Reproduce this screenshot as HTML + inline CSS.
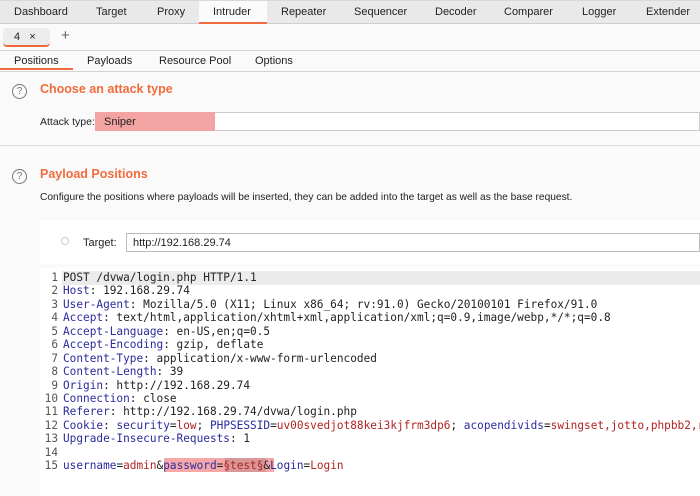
<!DOCTYPE html><html><head><style>
*{margin:0;padding:0;box-sizing:border-box}
body{width:700px;height:496px;overflow:hidden;background:#fafafa;font-family:"Liberation Sans",sans-serif;font-size:11px;color:#222;position:relative}
.a{position:absolute}
.bar1{left:0;top:0;width:700px;height:24px;background:#e9e9e9;border-bottom:1px solid #cfcfcf;border-top:1px solid #d8d8d8}
.bar1 span{position:absolute;top:5px}
.code{font-family:"DejaVu Sans Mono","Liberation Mono",monospace;font-size:11.1px;line-height:13.43px;white-space:pre;overflow:hidden}
.k{color:#2b2b9e}.v{color:#b22222}
</style></head><body>
<div class="a bar1">
<span style="left:14px">Dashboard</span><span style="left:96px">Target</span><span style="left:157px">Proxy</span>
<div class="a" style="left:199px;top:0;width:68px;height:23px;background:#fbfbfb;border-bottom:2px solid #f06a3c"></div>
<span style="left:213px">Intruder</span><span style="left:281px">Repeater</span><span style="left:354px">Sequencer</span><span style="left:435px">Decoder</span><span style="left:504px">Comparer</span><span style="left:582px">Logger</span><span style="left:646px">Extender</span>
</div>
<div class="a" style="left:0;top:50px;width:700px;height:1px;background:#d4d4d4"></div>
<div class="a" style="left:3px;top:28px;width:47px;height:19px;background:#ececec;border-radius:4px;border-bottom:2px solid #f06a3c"></div>
<div class="a" style="left:14px;top:31px">4&nbsp;&nbsp;&nbsp;×</div>
<div class="a" style="left:61px;top:27px;font-size:15px;color:#666">+</div>
<div class="a" style="left:0;top:71px;width:700px;height:1px;background:#d4d4d4"></div>
<div class="a" style="left:0;top:68px;width:73px;height:2px;background:#f06a3c"></div>
<div class="a" style="left:14px;top:55px">Positions</div><div class="a" style="left:87px;top:55px">Payloads</div><div class="a" style="left:159px;top:55px">Resource Pool</div><div class="a" style="left:255px;top:55px">Options</div>
<div class="a" style="left:12px;top:84px;width:15px;height:15px;border:1.3px solid #777;border-radius:50%;font-size:10px;text-align:center;line-height:13px;color:#777">?</div>
<div class="a" style="left:40px;top:82px;color:#f26b3a;font-weight:bold;font-size:12.5px">Choose an attack type</div>
<div class="a" style="left:40px;top:116px;font-size:10.5px">Attack type:</div>
<div class="a" style="left:97px;top:112px;width:603px;height:19px;background:#fff;border:1px solid #ccc"></div>
<div class="a" style="left:95px;top:112px;width:120px;height:19px;background:#f4a3a3"></div>
<div class="a" style="left:104px;top:116px">Sniper</div>
<div class="a" style="left:0;top:145px;width:700px;height:1px;background:#dcdcdc"></div>
<div class="a" style="left:12px;top:169px;width:15px;height:15px;border:1.3px solid #777;border-radius:50%;font-size:10px;text-align:center;line-height:13px;color:#777">?</div>
<div class="a" style="left:40px;top:167px;color:#f26b3a;font-weight:bold;font-size:12.5px">Payload Positions</div>
<div class="a" style="left:40px;top:192px;font-size:10.2px">Configure the positions where payloads will be inserted, they can be added into the target as well as the base request.</div>
<div class="a" style="left:40px;top:220px;width:660px;height:44px;background:#fff"></div>
<div class="a" style="left:61px;top:237px;width:8px;height:8px;border:1px solid #ccc;border-radius:50%"></div>
<div class="a" style="left:83px;top:237px">Target:</div>
<div class="a" style="left:126px;top:233px;width:574px;height:19px;background:#fff;border:1px solid #bbb"></div>
<div class="a" style="left:133px;top:237px">http://192.168.29.74</div>
<div class="a" style="left:40px;top:268px;width:660px;height:228px;background:#fff"></div>
<div class="a" style="left:62px;top:271px;width:638px;height:14px;background:#ebebeb"></div>
<div class="a" style="left:164px;top:458px;width:110px;height:14px;background:#f6a8a8"></div>
<div class="a" style="left:225px;top:458px;width:41px;height:14px;background:#d89898"></div>
<div class="a code" style="left:40px;top:271px;width:18px;text-align:right;color:#555">1
2
3
4
5
6
7
8
9
10
11
12
13
14
15</div>
<div class="a code" style="left:63px;top:271px;width:637px">POST /dvwa/login.php HTTP/1.1
<span class="k">Host</span>: 192.168.29.74
<span class="k">User-Agent</span>: Mozilla/5.0 (X11; Linux x86_64; rv:91.0) Gecko/20100101 Firefox/91.0
<span class="k">Accept</span>: text/html,application/xhtml+xml,application/xml;q=0.9,image/webp,*/*;q=0.8
<span class="k">Accept-Language</span>: en-US,en;q=0.5
<span class="k">Accept-Encoding</span>: gzip, deflate
<span class="k">Content-Type</span>: application/x-www-form-urlencoded
<span class="k">Content-Length</span>: 39
<span class="k">Origin</span>: http://192.168.29.74
<span class="k">Connection</span>: close
<span class="k">Referer</span>: http://192.168.29.74/dvwa/login.php
<span class="k">Cookie</span>: <span class="k">security</span>=<span class="v">low</span>; <span class="k">PHPSESSID</span>=<span class="v">uv00svedjot88kei3kjfrm3dp6</span>; <span class="k">acopendivids</span>=<span class="v">swingset,jotto,phpbb2,redmine</span>
<span class="k">Upgrade-Insecure-Requests</span>: 1

<span class="k">username</span>=<span class="v">admin</span>&amp;<span class="k">password</span>=<span class="v">§test§</span>&amp;<span class="k">Login</span>=<span class="v">Login</span></div>
</body></html>
